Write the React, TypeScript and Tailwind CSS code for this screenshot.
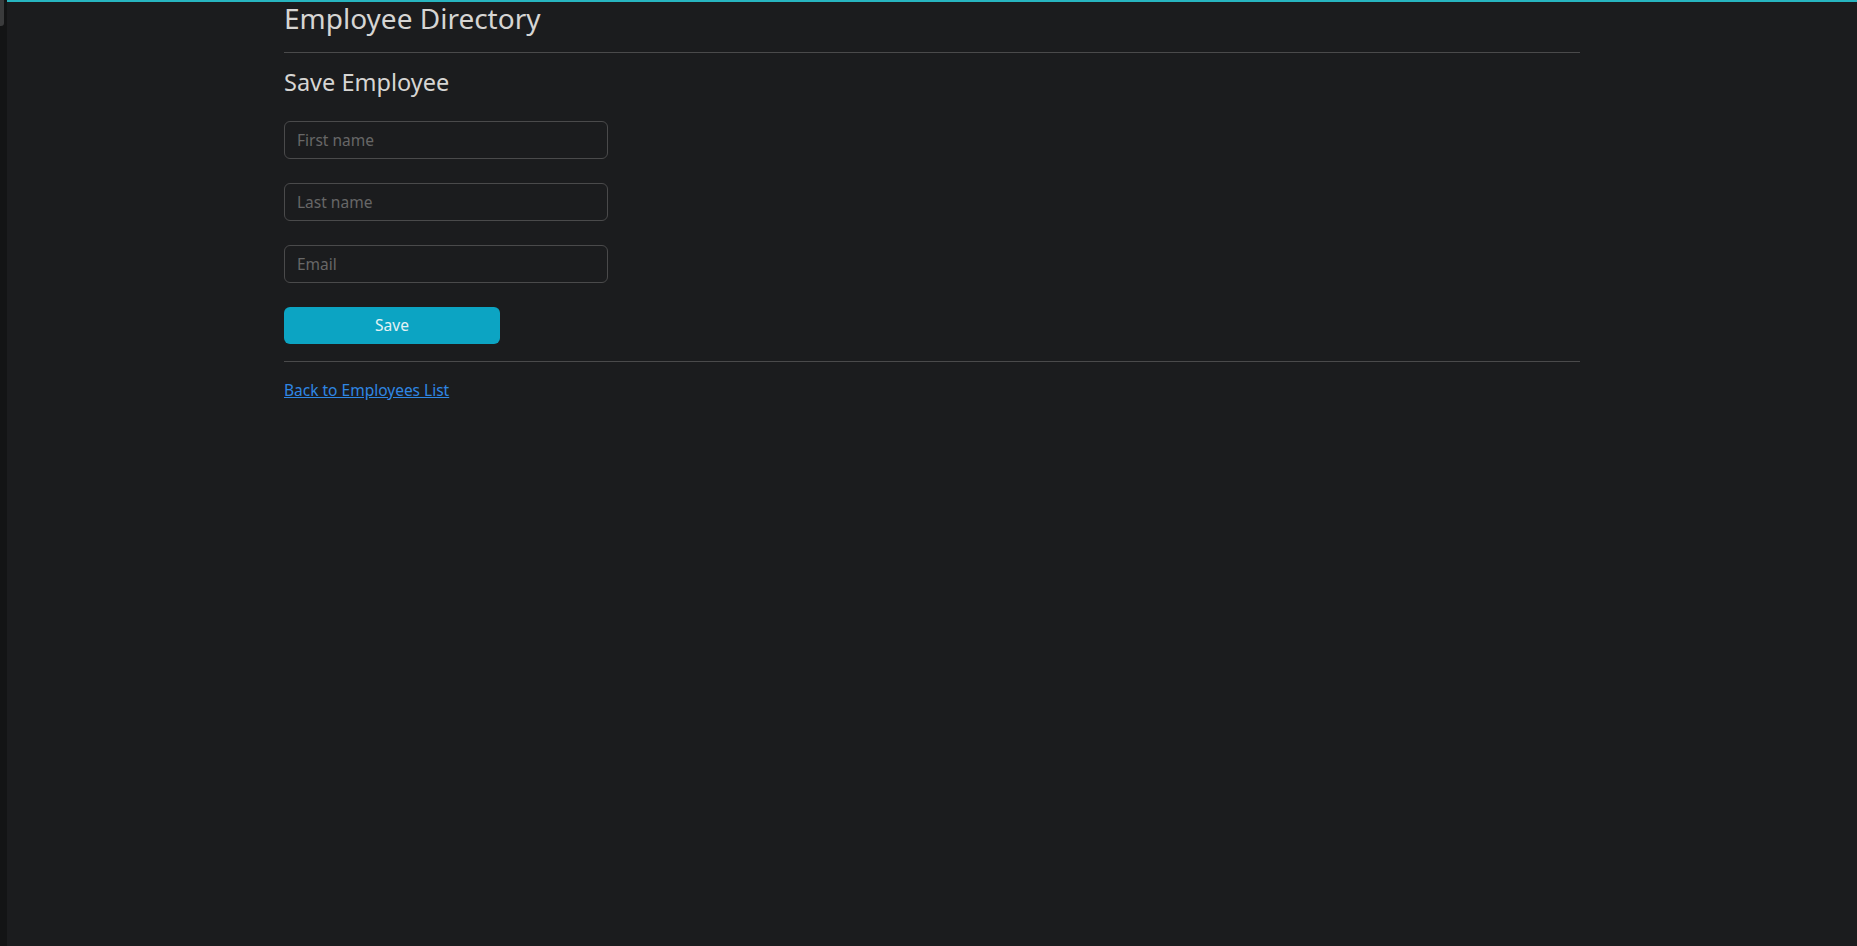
export default function App() {
  const fields = ["First name", "Last name", "Email"];
  return (
    <div className="flex min-h-[946px] bg-[#1b1c1e] text-[#dcdcdc]" style={{ fontFamily: '"Noto Sans", "Open Sans", sans-serif' }}>
      {/* left gutter with scrollbar thumb */}
      <div className="relative w-[7px] shrink-0 bg-[#131415]">
        <div className="absolute left-0 top-0 h-[26px] w-[4px] rounded-br-[3px] bg-[#3a3b3c]" />
      </div>
      <div className="flex-1">
        <div className="h-[2px] bg-[#27b5c0]" />
        <div className="mx-auto max-w-[1320px] px-3">
          <h3 className="text-[28px] leading-[1.2] font-normal text-[#d6d5d3]">Employee Directory</h3>
          <hr className="mt-4 border-0 border-t border-[#4a4a4b]" />
          <h4 className="mt-[15px] text-[23.5px] leading-[1.2] font-normal text-[#d6d5d3]">Save Employee</h4>
          <form className="mt-[25px] flex flex-col gap-6" onSubmit={e => e.preventDefault()}>
            {fields.map(f => (
              <input
                key={f}
                type="text"
                placeholder={f}
                className="h-[38px] w-[324px] rounded-[6px] border border-[#4a4a4b] bg-[#1b1c1e] px-3 text-[15.5px] text-[#dcdcdc] outline-none placeholder:text-[#676767]"
              />
            ))}
            <button type="submit" className="h-[37px] w-[216px] rounded-[6px] bg-[#0ca4c3] text-[15.5px] text-[#e4f2f5]">
              Save
            </button>
          </form>
          <hr className="mt-[17px] border-0 border-t border-[#4a4a4b]" />
          <a href="#" className="mt-4 inline-block text-[15.5px] leading-6 text-[#2f87e4] underline">
            Back to Employees List
          </a>
        </div>
      </div>
    </div>
  );
}
